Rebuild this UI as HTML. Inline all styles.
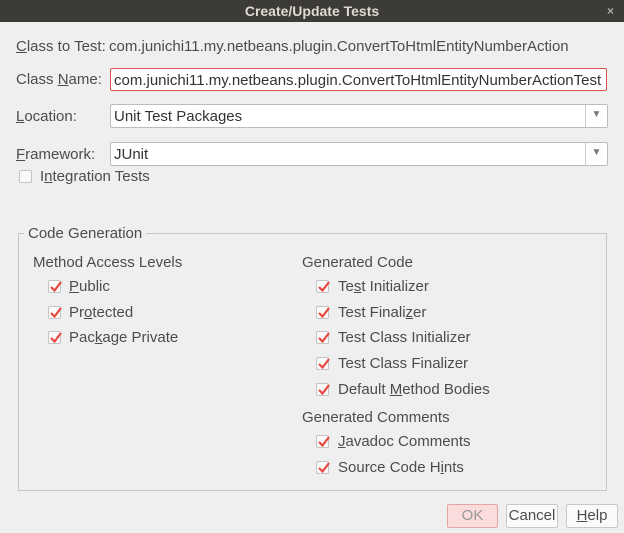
<!DOCTYPE html>
<html><head><meta charset="utf-8"><style>
*{box-sizing:border-box;margin:0;padding:0}
body{width:624px;height:533px;background:#efefef;font-family:"Liberation Sans",sans-serif;font-size:15px;color:#4c4c4c;position:relative;overflow:hidden}
.t{position:absolute;white-space:nowrap;line-height:18px}
.title{position:absolute;left:0;top:0;width:624px;height:22px;background:#3c3b37;color:#dfdbd2;font-weight:bold;font-size:14px;text-align:center;line-height:22px}
.x{position:absolute;right:10px;top:0;color:#aaa;font-size:12px;line-height:22px}
.box{position:absolute;background:#fff;border:1px solid #bdbdbd;border-radius:2px;padding-left:3px;padding-top:2px;line-height:20px;white-space:nowrap;overflow:hidden}
.dd{position:absolute;right:0;top:0;bottom:0;width:22px;border-left:1px solid #ccc;color:#777;font-size:10px;text-align:center}
.cb{position:absolute;width:13px;height:13px;border:1px solid #c4c4c4;background:#f9f9f9;border-radius:2px}
.cb svg{position:absolute;left:-1px;top:-2px}
.btn{position:absolute;height:24px;border:1px solid #c8c8c8;background:#fafafa;border-radius:2px;text-align:center;line-height:22px}
u{text-decoration:underline}
</style></head><body>
<div class="title">Create/Update Tests<span class="x">×</span></div>
<div class="t" style="left:16px;top:38px"><u>C</u>lass to Test:</div>
<div class="t" style="left:109px;top:38px">com.junichi11.my.netbeans.plugin.ConvertToHtmlEntityNumberAction</div>
<div class="t" style="left:16px;top:71px">Class <u>N</u>ame:</div>
<div class="box" style="left:110px;top:68px;width:497px;height:23px;border-color:#d9534f;color:#333">com.junichi11.my.netbeans.plugin.ConvertToHtmlEntityNumberActionTest</div>
<div class="t" style="left:16px;top:108px"><u>L</u>ocation:</div>
<div class="box" style="left:110px;top:104px;width:498px;height:24px;color:#333">Unit Test Packages<div class="dd">▼</div></div>
<div class="t" style="left:16px;top:146px"><u>F</u>ramework:</div>
<div class="box" style="left:110px;top:142px;width:498px;height:24px;color:#333">JUnit<div class="dd">▼</div></div>
<div class="cb" style="left:19px;top:170px"></div>
<div class="t" style="left:40px;top:168px">I<u>n</u>tegration Tests</div>
<div style="position:absolute;left:18px;top:233px;width:589px;height:258px;border:1px solid #c6c6c6"></div>
<div class="t" style="left:24px;top:225px;background:#efefef;padding:0 4px">Code Generation</div>
<div class="t" style="left:33px;top:254px">Method Access Levels</div>
<div class="t" style="left:302px;top:254px">Generated Code</div>
<div class="t" style="left:302px;top:409px">Generated Comments</div>
<svg width="0" height="0" style="position:absolute"><defs><symbol id="ck" viewBox="0 0 15 15"><path d="M3 8 L6.5 11.5 L13 3" stroke="#e8473f" stroke-width="2.2" fill="none"/></symbol></defs></svg>
<div class="cb" style="left:48px;top:280px"><svg width="15" height="15"><use href="#ck"/></svg></div><div class="t" style="left:69px;top:278px"><u>P</u>ublic</div>
<div class="cb" style="left:48px;top:306px"><svg width="15" height="15"><use href="#ck"/></svg></div><div class="t" style="left:69px;top:304px">Pr<u>o</u>tected</div>
<div class="cb" style="left:48px;top:331px"><svg width="15" height="15"><use href="#ck"/></svg></div><div class="t" style="left:69px;top:329px">Pac<u>k</u>age Private</div>
<div class="cb" style="left:316px;top:280px"><svg width="15" height="15"><use href="#ck"/></svg></div><div class="t" style="left:338px;top:278px">Te<u>s</u>t Initializer</div>
<div class="cb" style="left:316px;top:306px"><svg width="15" height="15"><use href="#ck"/></svg></div><div class="t" style="left:338px;top:304px">Test Finali<u>z</u>er</div>
<div class="cb" style="left:316px;top:331px"><svg width="15" height="15"><use href="#ck"/></svg></div><div class="t" style="left:338px;top:329px">Test Class Initializer</div>
<div class="cb" style="left:316px;top:357px"><svg width="15" height="15"><use href="#ck"/></svg></div><div class="t" style="left:338px;top:355px">Test Class Finalizer</div>
<div class="cb" style="left:316px;top:383px"><svg width="15" height="15"><use href="#ck"/></svg></div><div class="t" style="left:338px;top:381px">Default <u>M</u>ethod Bodies</div>
<div class="cb" style="left:316px;top:435px"><svg width="15" height="15"><use href="#ck"/></svg></div><div class="t" style="left:338px;top:433px"><u>J</u>avadoc Comments</div>
<div class="cb" style="left:316px;top:461px"><svg width="15" height="15"><use href="#ck"/></svg></div><div class="t" style="left:338px;top:459px">Source Code H<u>i</u>nts</div>
<div class="btn" style="left:447px;top:504px;width:51px;background:#fbdcdc;border-color:#e3a5a5;color:#999">OK</div>
<div class="btn" style="left:506px;top:504px;width:52px">Cancel</div>
<div class="btn" style="left:566px;top:504px;width:52px"><u>H</u>elp</div>
</body></html>
